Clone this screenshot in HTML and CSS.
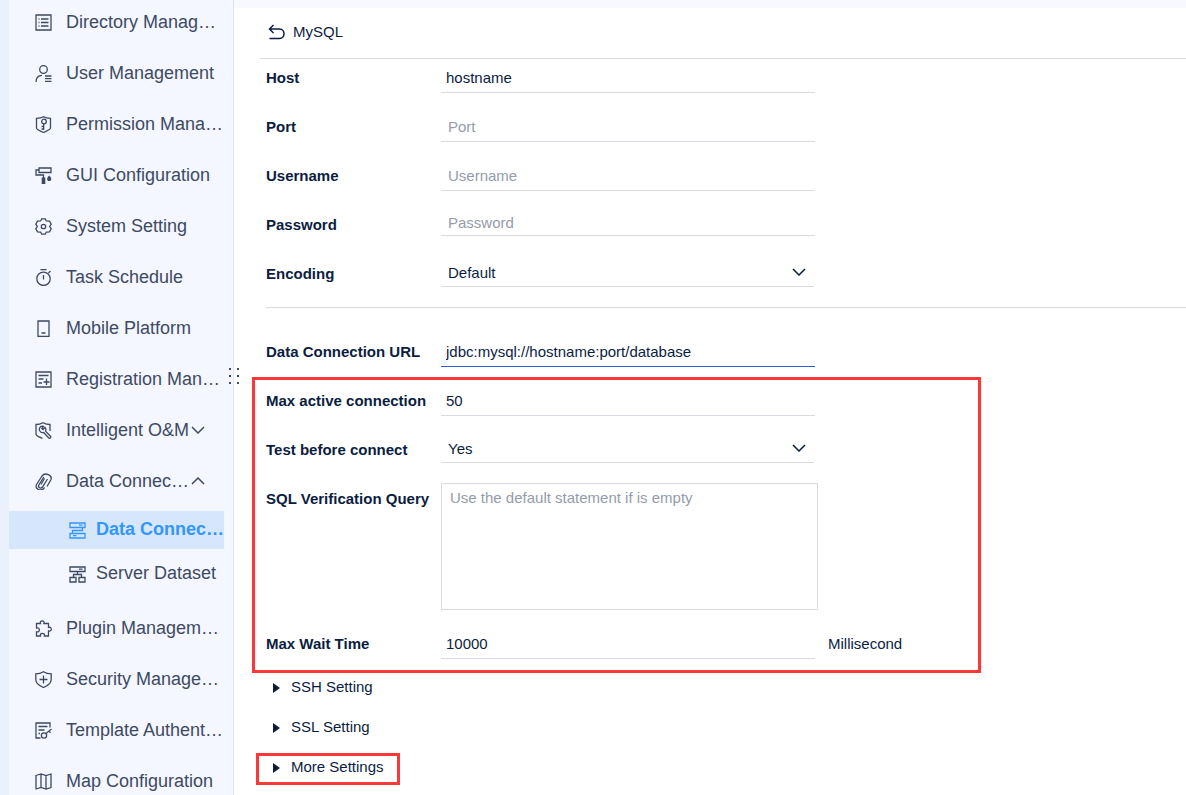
FILE: index.html
```html
<!DOCTYPE html>
<html lang="en">
<head>
    <meta charset="UTF-8">
    <meta name="viewport" content="width=device-width, initial-scale=1.0">
    <title>MySQL Data Connection</title>
    <link rel="stylesheet" href="styles.css">
</head>
<body>
    <div class="layout">
        <!-- Sidebar -->
        <nav class="sidebar">
            <ul class="menu">
                <li><a class="menu-item" href="#">
                    <svg class="icon" viewBox="0 0 17 17"><path d="M1 1h15v15H1zM6 5h7.500M6 8.500h7.500M6 12h7.500M3.500 5h1M3.500 8.500h1M3.500 12h1"/></svg>
                    <span>Directory Manag…</span>
                </a></li>
                <li><a class="menu-item" href="#">
                    <svg class="icon" viewBox="0 0 17 17"><circle cx="8.500" cy="4.500" r="3.800"/><path d="M1 17c0-4 2.500-6.500 6-6.700M10 11h6.500M10 13.700h6.500M10 16.400h6.500"/></svg>
                    <span>User Management</span>
                </a></li>
                <li><a class="menu-item" href="#">
                    <svg class="icon" viewBox="0 0 17 17"><path d="M8.500.7C6.500 2 4 2.300 1.500 2.300V12c0 1.500 3 2.800 7 4.500 4-1.700 7-3 7-4.500V2.300C13 2.300 10.500 2 8.500.7z"/><circle cx="9" cy="5.500" r="2.300"/><path d="M8.700 8v6M8.500 10.500H6.500M8.500 13H6.500"/></svg>
                    <span>Permission Mana…</span>
                </a></li>
                <li><a class="menu-item" href="#">
                    <svg class="icon" viewBox="0 0 17 17"><path d="M4 1h12v4.500H4zM4 3H1v5h7.500v3"/><path class="solid" d="M6.700 10.500h3.600v6.500H6.700zM14.200 8.500c3.500 3.500 2 5.500 0 5.500s-3.500-2 0-5.500z"/></svg>
                    <span>GUI Configuration</span>
                </a></li>
                <li><a class="menu-item" href="#">
                    <svg class="icon" viewBox="0 0 17 17"><path d="M6.700.8h3.600l1 2.200 3.200.2 1.700 3-1.500 2.300 1.500 2.300-1.700 3-3.200.2-1 2.200H6.700l-1-2.200-3.200-.2-1.700-3 1.500-2.300L.8 6.200l1.700-3L5.700 3z"/><circle cx="8.500" cy="8.500" r="2.200"/></svg>
                    <span>System Setting</span>
                </a></li>
                <li><a class="menu-item" href="#">
                    <svg class="icon" viewBox="0 0 17 17"><circle cx="8.500" cy="9.800" r="6.700"/><path d="M5.500.7h6M8.500 6v4.500M13.500 4l2-2"/></svg>
                    <span>Task Schedule</span>
                </a></li>
                <li><a class="menu-item" href="#">
                    <svg class="icon" viewBox="0 0 17 17"><path d="M3 1h11v15.500H3zM6.500 13h4"/></svg>
                    <span>Mobile Platform</span>
                </a></li>
                <li><a class="menu-item" href="#">
                    <svg class="icon" viewBox="0 0 17 17"><path d="M1 1h15v15H1zM3.500 4.500h10M3.500 8h5M3.500 12H7M11.500 7.500v6.500M8.500 11h6"/></svg>
                    <span>Registration Man…</span>
                </a></li>
                <li><a class="menu-item" href="#">
                    <svg class="icon" viewBox="0 0 17 17"><path d="M15 9V2.500C12 2.500 10 1.800 8 .7 6 1.800 4 2.500 1 2.500V12c0 1.500 3 3 6.500 4.300"/><path d="M8.500 4.300c-3-.8-5 2-3.800 4.500 1 1.800 3 2 4 1.700l5 5.500c1.300.7 2.500-.7 1.800-1.800l-5-5c.8-1.700.2-3-.5-3.700L8 7.500 6.800 6.500z"/></svg>
                    <span class="expandable">Intelligent O&amp;M</span>
                    <svg class="chevron" viewBox="0 0 14 8"><path d="M1 1l6 6 6-6"/></svg>
                </a></li>
                <li>
                    <a class="menu-item" href="#">
                        <svg class="icon" viewBox="0 0 17 17"><path d="M9.500 14.500l-1 1.300c-3 2.700-9 .2-7-4.300l5.500-8.500c3-4 10.500-1 9 3.500L12 13.500M12.500 6l-5 8c-1.800 2.200-4.800.5-3.700-2l5-8M9.500 5.500L6 11.500"/></svg>
                        <span class="expandable">Data Connec…</span>
                        <svg class="chevron" viewBox="0 0 14 8"><path d="M1 7l6-6 6 6"/></svg>
                    </a>
                    <ul class="submenu">
                        <li><a class="submenu-item active" href="#">
                            <svg class="icon" viewBox="0 0 17 17"><path d="M1 1h15v4.500H1zM1 11.500h15V16H1zM10 3.200h3.500M4 13.700h3.500M13.500 5.500v3h-10v3"/></svg>
                            <span>Data Connec…</span>
                        </a></li>
                        <li><a class="submenu-item" href="#">
                            <svg class="icon" viewBox="0 0 17 17"><path d="M1 1h15v4.500H1zM10 3.200h3.500M8.500 5.500v3M4.500 11.500v-3h8v3M1 11.500h6V16H1zM10 11.500h6V16h-6z"/></svg>
                            <span>Server Dataset</span>
                        </a></li>
                    </ul>
                </li>
                <li><a class="menu-item" href="#">
                    <svg class="icon" viewBox="0 0 17 17"><path d="M1.500 3.500h4C4.800 1.800 5.800.8 7.200.8s2.400 1 1.700 2.700h4.600v4c1.700-.7 2.800.3 2.800 1.700s-1.100 2.300-2.800 1.600V16H9.400c.6-1.700-.6-2.700-2-2.700s-2.500 1-1.900 2.700h-4v-4.200c1.900.5 2.900-.6 2.900-2S3.400 7.500 1.500 8z"/></svg>
                    <span>Plugin Managem…</span>
                </a></li>
                <li><a class="menu-item" href="#">
                    <svg class="icon" viewBox="0 0 17 17"><path d="M8.500.7C6.500 2 4 2.800.8 2.800v5.700c0 4.500 4 6.500 7.700 8 3.700-1.500 7.700-3.500 7.700-8V2.800C13 2.800 10.500 2 8.500.7zM8.500 4.500v8M4.500 8.500h8"/></svg>
                    <span>Security Manage…</span>
                </a></li>
                <li><a class="menu-item" href="#">
                    <svg class="icon" viewBox="0 0 17 17"><path d="M15 5.500V1H1v15h4.500M3.500 4.500h9M3.500 8h6M3.500 11.500H5M11 11.500L16.500 7M14 9l1.500 1.700"/><circle cx="9" cy="13.500" r="2.600"/></svg>
                    <span>Template Authent…</span>
                </a></li>
                <li><a class="menu-item" href="#">
                    <svg class="icon" viewBox="0 0 17 17"><path d="M1 2.500l5-1.500 5 1.500L16 1v13.500L11 16l-5-1.500L1 16zM6 1v13.500M11 2.500V16"/></svg>
                    <span>Map Configuration</span>
                </a></li>
            </ul>
            <div class="resize-handle"><i></i><i></i><i></i><i></i><i></i><i></i></div>
        </nav>

        <!-- Connection form -->
        <main class="content">
            <header class="page-header">
                <button class="back" type="button" aria-label="Back">
                    <svg viewBox="0 0 17 17"><path d="M5.500 1L1.500 5l4 4M2 5h9.500c6 0 6 9.500 0 9.500H1.500"/></svg>
                </button>
                <h1>MySQL</h1>
            </header>

            <form class="form">
                <div class="row">
                    <label for="host">Host</label>
                    <input class="field" id="host" type="text" value="hostname">
                </div>
                <div class="row">
                    <label for="port">Port</label>
                    <input class="field" id="port" type="text" placeholder="Port">
                </div>
                <div class="row">
                    <label for="username">Username</label>
                    <input class="field" id="username" type="text" placeholder="Username">
                </div>
                <div class="row">
                    <label for="password">Password</label>
                    <input class="field password" id="password" type="password" placeholder="Password">
                </div>
                <div class="row">
                    <label for="encoding">Encoding</label>
                    <div class="select">
                        <select class="field" id="encoding"><option>Default</option></select>
                        <svg class="chevron" viewBox="0 0 14 8"><path d="M1 1l6 6 6-6"/></svg>
                    </div>
                </div>

                <hr class="divider">

                <div class="row">
                    <label for="url">Data Connection URL</label>
                    <input class="field focused" id="url" type="text" value="jdbc:mysql://hostname:port/database">
                </div>

                <div class="pool">
                    <div class="row">
                        <label for="max-active">Max active connection</label>
                        <input class="field" id="max-active" type="text" value="50">
                    </div>
                    <div class="row">
                        <label for="test">Test before connect</label>
                        <div class="select">
                            <select class="field" id="test"><option>Yes</option></select>
                            <svg class="chevron" viewBox="0 0 14 8"><path d="M1 1l6 6 6-6"/></svg>
                        </div>
                    </div>
                    <div class="row">
                        <label for="query">SQL Verification Query</label>
                        <textarea id="query" placeholder="Use the default statement if is empty"></textarea>
                    </div>
                    <div class="row">
                        <label for="max-wait">Max Wait Time</label>
                        <input class="field" id="max-wait" type="text" value="10000">
                        <span class="unit">Millisecond</span>
                    </div>
                </div>

                <details><summary>SSH Setting</summary></details>
                <details><summary>SSL Setting</summary></details>
                <details class="marked"><summary>More Settings</summary></details>
            </form>
        </main>
    </div>
</body>
</html>
```

FILE: styles.css
```css
/* Reset */
*,
*::before {
    margin: 0;
    padding: 0;
    box-sizing: border-box;
}

:root {
    --text: #0b1d3f;
    --menu-text: #3d4a63;
    --muted: #949cab;
    --line: #d9dbe3;
    --active: #3296fa;
    --focus: #2b5fdb;
    --mark: #fc3737;
}

body {
    font: 15px/20px "Liberation Sans", Arial, sans-serif;
    color: var(--text);
    background: #fff;
}

ul {
    list-style: none;
}

svg {
    fill: none;
    stroke: currentColor;
    stroke-width: 1.3;
    flex: none;
}

.layout {
    display: flex;
    height: 100vh;
    overflow: hidden;
}

/* Sidebar */
.sidebar {
    position: relative;
    flex: 0 0 234px;
    min-width: 0;
    border-left: 9px solid #eaf1fd;
    border-right: 1px solid #dfe4f0;
    background: #f4f7ff;
}

.menu {
    margin-top: -4px;
}

.menu-item,
.submenu-item {
    display: flex;
    align-items: center;
    gap: 14px;
    height: 51px;
    padding-left: 26px;
    font-size: 18px;
    color: var(--menu-text);
    text-decoration: none;
    white-space: nowrap;
}

.icon {
    width: 17px;
    height: 17px;
    margin-top: 2px;
}

.icon .solid {
    fill: currentColor;
    stroke: none;
}

.expandable {
    width: 120px;
}

.chevron {
    width: 14px;
    height: 8px;
    stroke-width: 1.5;
}

.menu-item .chevron {
    margin-left: -9px;
}

.submenu {
    display: grid;
    gap: 6px;
    padding: 5px 0 9px;
}

.submenu-item {
    gap: 10px;
    height: 38px;
    margin-right: 12px;
    padding-left: 60px;
    padding-bottom: 2px;
}

.submenu-item.active {
    background: #d6e7fd;
    color: var(--active);
    font-weight: bold;
}

.resize-handle {
    position: absolute;
    top: 368px;
    right: -6px;
    display: grid;
    grid-template-columns: 2px 2px;
    gap: 5px 6px;
}

.resize-handle i {
    height: 2px;
    background: #3d4a63;
}

/* Content */
.content {
    flex: 1;
    min-width: 0;
    border-top: 8px solid #f8f9fe;
}

.page-header {
    display: flex;
    align-items: center;
    gap: 8px;
    height: 51px;
    margin-left: 26px;
    padding-left: 8px;
    padding-bottom: 2px;
    border-bottom: 1px solid var(--line);
}

.page-header h1 {
    font-size: 15px;
    font-weight: normal;
}

.back {
    width: 17px;
    height: 17px;
    border: 0;
    background: none;
    color: inherit;
}

.back svg {
    display: block;
    stroke-width: 1.5;
}

.form {
    padding-left: 32px;
}

.row {
    display: grid;
    grid-template-columns: 175px 377px auto;
    align-items: start;
    justify-content: start;
    min-height: 34px;
    margin-bottom: 15px;
}

.row label {
    padding-top: 9px;
    font-weight: bold;
}

.field {
    width: 374px;
    height: 34px;
    padding: 3px 5px 0;
    border: 0;
    border-bottom: 1px solid var(--line);
    border-radius: 0;
    outline: 0;
    background: transparent;
    color: inherit;
    font: inherit;
}

.field:placeholder-shown {
    padding-left: 7px;
}

.field.password {
    height: 30px;
}

.field.focused {
    border-color: var(--focus);
}

::placeholder {
    color: var(--muted);
}

.select {
    position: relative;
    width: 373px;
}

.select .field {
    display: block;
    width: 100%;
    height: 32px;
    padding-top: 5px;
    padding-left: 7px;
    appearance: none;
}

.select .chevron {
    position: absolute;
    top: 13px;
    right: 8px;
    pointer-events: none;
}

textarea {
    display: block;
    width: 377px;
    height: 127px;
    margin-top: 3px;
    padding: 4px 8px;
    border: 1px solid var(--line);
    outline: 0;
    resize: none;
    color: inherit;
    font: inherit;
}

.unit {
    padding: 9px 0 0 10px;
}

.divider {
    margin: 18px 0 25px;
    border: 0;
    border-top: 1px solid var(--line);
}

/* Highlighted settings */
.pool,
.marked {
    position: relative;
}

.pool::before,
.marked::before {
    content: "";
    position: absolute;
    border: 3px solid var(--mark);
    pointer-events: none;
}

.pool::before {
    top: -5px;
    bottom: -14px;
    left: -14px;
    width: 729px;
}

.marked::before {
    top: 6px;
    left: -10px;
    width: 144px;
    height: 32px;
}

.pool {
    margin-bottom: 8px;
}

.pool .row:last-child {
    margin-bottom: 0;
}

/* Collapsed sections */
summary {
    display: flex;
    align-items: center;
    gap: 11px;
    height: 40px;
    padding-left: 7px;
    cursor: pointer;
}

summary::before {
    content: "";
    margin-top: 2px;
    border: solid transparent;
    border-width: 5px 0 5px 7px;
    border-left-color: var(--text);
}
```
